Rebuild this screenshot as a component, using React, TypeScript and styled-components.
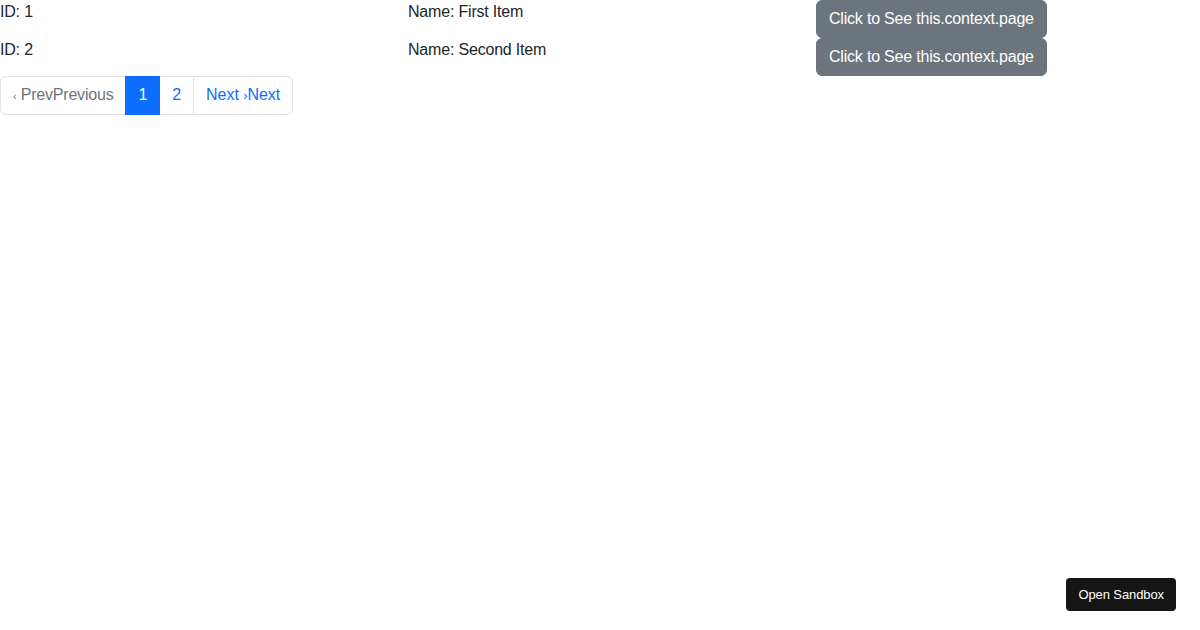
import React from "react";
import styled, { createGlobalStyle } from "styled-components";

const Global = createGlobalStyle`
  * { box-sizing: border-box; }
  html, body { margin: 0; padding: 0; background: #fff; }
  body {
    font-family: "Liberation Sans", Arial, sans-serif;
    font-size: 16px;
    line-height: 1.5;
    color: #212529;
  }
`;

const Page = styled.div`
  width: 100%;
  overflow: hidden;
`;

const Row = styled.div`
  display: flex;
  margin: 0 -12px;
  letter-spacing: -0.19px;
`;

const Col = styled.div`
  flex: 1 0 0;
  padding: 0 12px;
  min-width: 0;
`;

const Button = styled.button`
  display: inline-block;
  font-family: inherit;
  font-size: 16px;
  line-height: 24px;
  letter-spacing: -0.2px;
  padding: 6px 12px;
  border: 1px solid #6c757d;
  border-radius: 6px;
  background: #6c757d;
  color: #fff;
  cursor: pointer;
  vertical-align: top;
`;

const Pagination = styled.ul`
  display: flex;
  list-style: none;
  margin: 0;
  padding: 0;
`;

const PageItem = styled.li<{ $active?: boolean; $disabled?: boolean; $tight?: number }>`
  display: block;
  padding: 6px 12px;
  line-height: 24px;
  font-size: 16px;
  letter-spacing: ${(p) => p.$tight ?? -0.1}px;
  border: 1px solid ${(p) => (p.$active ? "#0d6efd" : "#dee2e6")};
  margin-left: -1px;
  background: ${(p) => (p.$active ? "#0d6efd" : "#fff")};
  color: ${(p) => (p.$active ? "#fff" : p.$disabled ? "#6c757d" : "#0d6efd")};
  position: relative;
  z-index: ${(p) => (p.$active ? 1 : 0)};
  &:first-child {
    margin-left: 0;
    border-top-left-radius: 6px;
    border-bottom-left-radius: 6px;
  }
  &:last-child {
    border-top-right-radius: 6px;
    border-bottom-right-radius: 6px;
  }
`;

const Chevron = styled.span<{ $size: number }>`
  font-size: ${(p) => p.$size}px;
`;

const SandboxButton = styled.button`
  position: fixed;
  right: 24px;
  bottom: 19px;
  height: 33px;
  padding: 0 12px;
  border: none;
  border-radius: 4px;
  background: #151515;
  color: #fff;
  font-family: "Liberation Sans", Arial, sans-serif;
  font-size: 13px;
  letter-spacing: -0.1px;
  white-space: nowrap;
  cursor: pointer;
`;

const items = [
  { id: 1, name: "First Item" },
  { id: 2, name: "Second Item" },
];

export default function App() {
  return (
    <Page>
      <Global />
      {items.map((it) => (
        <Row key={it.id}>
          <Col>ID: {it.id}</Col>
          <Col>Name: {it.name}</Col>
          <Col>
            <Button>Click to See this.context.page</Button>
          </Col>
        </Row>
      ))}
      <Pagination>
        <PageItem $disabled $tight={-0.2}>
          <Chevron $size={11}>‹</Chevron> PrevPrevious
        </PageItem>
        <PageItem $active>1</PageItem>
        <PageItem>2</PageItem>
        <PageItem $tight={-0.05}>
          Next <Chevron $size={13}>›</Chevron>Next
        </PageItem>
      </Pagination>
      <SandboxButton>Open Sandbox</SandboxButton>
    </Page>
  );
}
